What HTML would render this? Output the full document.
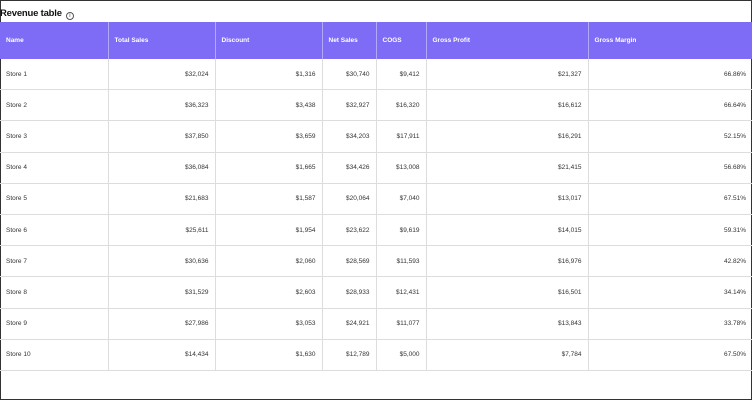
<!DOCTYPE html><html><head><style>
body{margin:0;width:752px;height:400px;overflow:hidden;background:#fff;font-family:"Liberation Sans",sans-serif;}
.f{position:absolute;left:0;top:0;width:750px;height:398px;border:1px solid #333;}
.t{position:absolute;left:0;top:8px;font-size:9.5px;font-weight:bold;color:#111;letter-spacing:-0.2px}
.i{display:inline-block;width:6px;height:6px;border:1px solid #555;border-radius:50%;margin-left:4px;vertical-align:-1px;font-size:5px;line-height:6px;text-align:center;font-weight:normal}
table{position:absolute;left:0;top:22px;border-collapse:collapse;width:752px;table-layout:fixed}
th{background:#7e6bf6;color:#fff;font-size:6.5px;text-align:left;height:37px;padding:0 6px;border-right:1px solid #b3a8fa;font-weight:bold}
td{height:30.2px;font-size:6.5px;color:#333;text-align:right;padding:0 6px;border-right:1px solid #ddd;border-bottom:1px solid #ddd}
td:first-child{text-align:left}
tr>*:last-child{border-right:none}
</style></head><body><div class="f"></div>
<div class="t">Revenue table<span class="i">i</span></div>
<table><colgroup><col style="width:108px"><col style="width:107px"><col style="width:107px"><col style="width:54px"><col style="width:50px"><col style="width:162px"><col style="width:164px"></colgroup>
<tr><th>Name</th><th>Total Sales</th><th>Discount</th><th>Net Sales</th><th>COGS</th><th>Gross Profit</th><th>Gross Margin</th></tr>
<tr><td>Store 1</td><td>$32,024</td><td>$1,316</td><td>$30,740</td><td>$9,412</td><td>$21,327</td><td>66.86%</td></tr>
<tr><td>Store 2</td><td>$36,323</td><td>$3,438</td><td>$32,927</td><td>$16,320</td><td>$16,612</td><td>66.64%</td></tr>
<tr><td>Store 3</td><td>$37,850</td><td>$3,659</td><td>$34,203</td><td>$17,911</td><td>$16,291</td><td>52.15%</td></tr>
<tr><td>Store 4</td><td>$36,084</td><td>$1,665</td><td>$34,426</td><td>$13,008</td><td>$21,415</td><td>56.68%</td></tr>
<tr><td>Store 5</td><td>$21,683</td><td>$1,587</td><td>$20,064</td><td>$7,040</td><td>$13,017</td><td>67.51%</td></tr>
<tr><td>Store 6</td><td>$25,611</td><td>$1,954</td><td>$23,622</td><td>$9,619</td><td>$14,015</td><td>59.31%</td></tr>
<tr><td>Store 7</td><td>$30,636</td><td>$2,060</td><td>$28,569</td><td>$11,593</td><td>$16,976</td><td>42.82%</td></tr>
<tr><td>Store 8</td><td>$31,529</td><td>$2,603</td><td>$28,933</td><td>$12,431</td><td>$16,501</td><td>34.14%</td></tr>
<tr><td>Store 9</td><td>$27,986</td><td>$3,053</td><td>$24,921</td><td>$11,077</td><td>$13,843</td><td>33.78%</td></tr>
<tr><td>Store 10</td><td>$14,434</td><td>$1,630</td><td>$12,789</td><td>$5,000</td><td>$7,784</td><td>67.50%</td></tr>
</table></body></html>
